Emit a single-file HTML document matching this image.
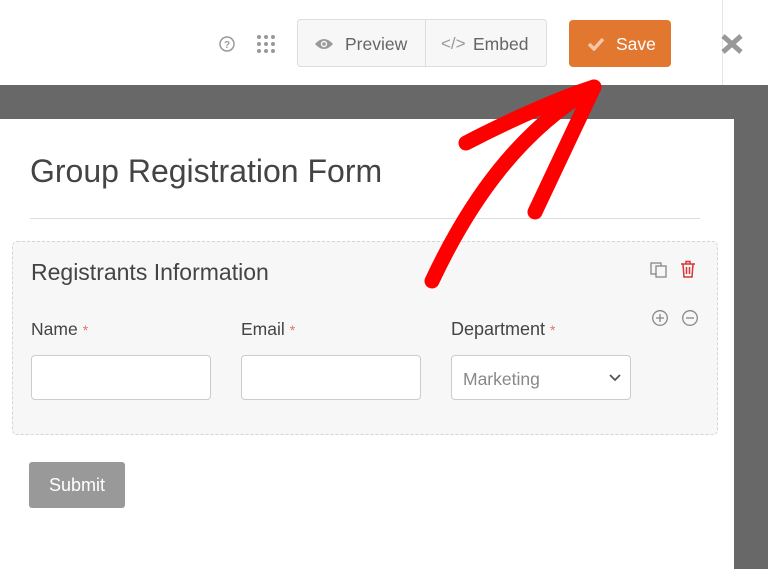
<!DOCTYPE html>
<html><head><style>
*{margin:0;padding:0;box-sizing:border-box}
body{width:768px;height:569px;overflow:hidden;position:relative;background:#fff;font-family:"Liberation Sans",sans-serif;color:#444}
.a{position:absolute}
.btn{border:1px solid #ddd;background:#f7f7f7;border-radius:4px}
.lab{font-size:17.5px;color:#444}
.lab span{color:#e27370;font-size:14px;margin-left:5px}
.in{position:absolute;top:355px;width:180px;height:45px;background:#fff;border:1px solid #ccc;border-radius:4px}
</style></head><body>
<div class="a" style="left:722px;top:0;width:1px;height:85px;background:#e5e5e5"></div>
<svg class="a" style="left:218px;top:35px" width="18" height="18" viewBox="0 0 18 18"><circle cx="9" cy="9" r="7" fill="none" stroke="#999" stroke-width="1.5"/><text x="9" y="13" font-size="10" text-anchor="middle" fill="#999" font-family="Liberation Sans" font-weight="bold">?</text></svg>
<svg class="a" style="left:256px;top:34px" width="20" height="20"><g fill="#999"><circle cx="3" cy="3" r="2"/><circle cx="10" cy="3" r="2"/><circle cx="17" cy="3" r="2"/><circle cx="3" cy="10" r="2"/><circle cx="10" cy="10" r="2"/><circle cx="17" cy="10" r="2"/><circle cx="3" cy="17" r="2"/><circle cx="10" cy="17" r="2"/><circle cx="17" cy="17" r="2"/></g></svg>
<div class="a btn" style="left:297px;top:19px;width:250px;height:48px"></div>
<div class="a" style="left:425px;top:20px;width:1px;height:46px;background:#ddd"></div>
<svg class="a" style="left:314px;top:37px" width="20" height="14"><path d="M1 7 Q10 -3 19 7 Q10 17 1 7Z" fill="#999"/><circle cx="10" cy="7" r="3.2" fill="#f7f7f7"/><circle cx="10" cy="7" r="1.8" fill="#999"/></svg>
<div class="a" style="left:345px;top:34px;font-size:17.5px;color:#666">Preview</div>
<div class="a" style="left:441px;top:34px;font-size:17px;color:#999">&lt;/&gt;</div>
<div class="a" style="left:473px;top:34px;font-size:17.5px;color:#666">Embed</div>
<div class="a" style="left:569px;top:20px;width:102px;height:47px;background:#e27730;border-radius:4px"></div>
<svg class="a" style="left:587px;top:37px" width="18" height="14"><path d="M2 7 L7 12 L16 2" fill="none" stroke="#f5c7a8" stroke-width="3.5"/></svg>
<div class="a" style="left:616px;top:34px;font-size:17.5px;color:#fff">Save</div>
<svg class="a" style="left:720px;top:33px" width="24" height="22"><path d="M3 3 L21 19 M21 3 L3 19" stroke="#999" stroke-width="5"/></svg>
<div class="a" style="left:0;top:85px;width:768px;height:34px;background:#686868"></div>
<div class="a" style="left:734px;top:85px;width:34px;height:484px;background:#686868"></div>
<div class="a" style="left:30px;top:153px;font-size:32px;color:#444">Group Registration Form</div>
<div class="a" style="left:30px;top:218px;width:670px;height:1px;background:#ddd"></div>
<div class="a" style="left:12px;top:241px;width:706px;height:194px;background:#f7f7f7;border:1px dashed #d5d5d5;border-radius:5px"></div>
<div class="a" style="left:31px;top:259px;font-size:23px;color:#444">Registrants Information</div>
<svg class="a" style="left:650px;top:260px" width="18" height="18"><rect x="1" y="3" width="10" height="11" fill="none" stroke="#888" stroke-width="1.3"/><rect x="6" y="6" width="10" height="11" fill="#f7f7f7" stroke="#888" stroke-width="1.3"/></svg>
<svg class="a" style="left:680px;top:260px" width="16" height="18"><path d="M1 4 H15 M6 4 V1.5 H10 V4 M3 4 L4 17 H12 L13 4 M6.5 7 V14 M9.5 7 V14" fill="none" stroke="#d63638" stroke-width="1.5"/></svg>
<svg class="a" style="left:651px;top:309px" width="18" height="18"><circle cx="9" cy="9" r="7.3" fill="none" stroke="#888" stroke-width="1.3"/><path d="M9 5 V13 M5 9 H13" stroke="#888" stroke-width="1.3"/></svg>
<svg class="a" style="left:681px;top:309px" width="18" height="18"><circle cx="9" cy="9" r="7.3" fill="none" stroke="#888" stroke-width="1.3"/><path d="M5 9 H13" stroke="#888" stroke-width="1.3"/></svg>
<div class="a lab" style="left:31px;top:319px">Name<span>*</span></div>
<div class="a lab" style="left:241px;top:319px">Email<span>*</span></div>
<div class="a lab" style="left:451px;top:319px;font-size:18px">Department<span>*</span></div>
<div class="in" style="left:31px"></div>
<div class="in" style="left:241px"></div>
<div class="in" style="left:451px"></div>
<div class="a" style="left:463px;top:369px;font-size:17.5px;color:#888">Marketing</div>
<svg class="a" style="left:608px;top:373px" width="14" height="10"><path d="M2 2 L7 7 L12 2" fill="none" stroke="#555" stroke-width="1.8"/></svg>
<div class="a" style="left:29px;top:462px;width:96px;height:46px;background:#999;border-radius:3px;color:#fff;font-size:18px;text-align:center;line-height:46px">Submit</div>
<svg class="a" style="left:0;top:0" width="768" height="569"><g fill="none" stroke="#ff0000" stroke-width="15" stroke-linecap="round" stroke-linejoin="round"><path d="M432 281 C470 200 520 130 594 87"/><path d="M466 143 C510 120 560 98 594 87 L535 212"/></g></svg>
</body></html>
